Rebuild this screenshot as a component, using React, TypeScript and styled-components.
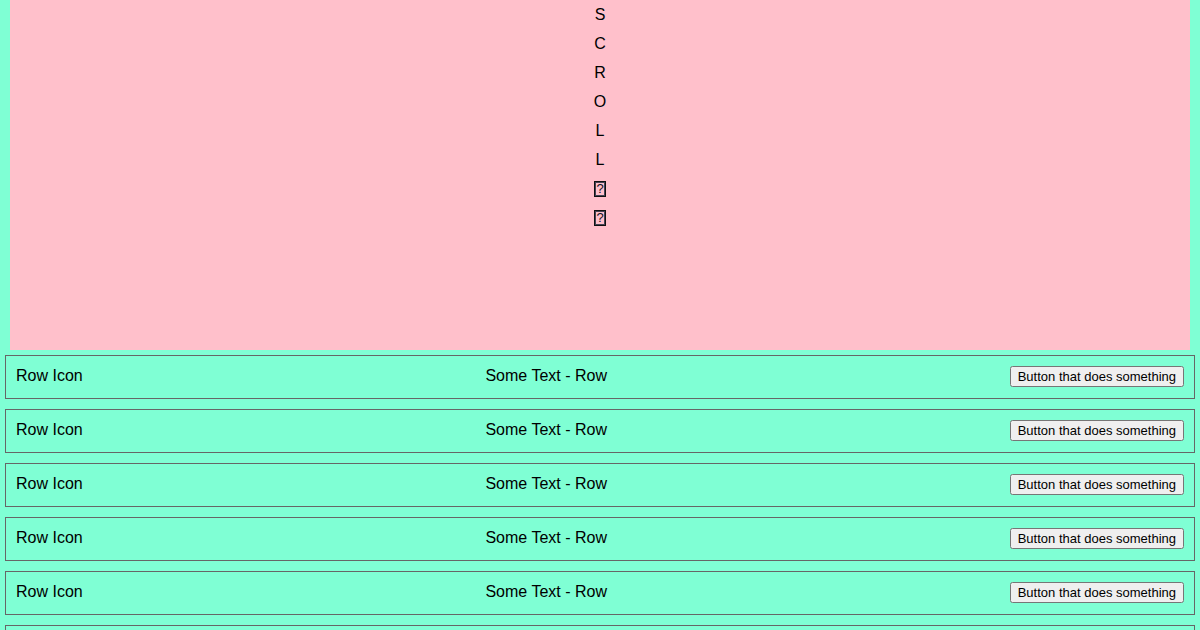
import * as React from 'react';
import styled, { createGlobalStyle } from 'styled-components';

const GlobalStyle = createGlobalStyle`
  body {
    margin: 0;
    background: aquamarine;
    font-family: "Liberation Sans", Arial, sans-serif;
    font-size: 16px;
    color: #000;
  }
`;

const ScrollPanel = styled.div`
  margin: 0 10px;
  height: 350px;
  background: pink;
  display: flex;
  flex-direction: column;
  align-items: center;
`;

const Letter = styled.div`
  line-height: 29px;
  height: 29px;
  display: flex;
  align-items: center;
`;

// stands in for the emoji glyph that the reference could not render
const MissingGlyph = styled.span`
  display: inline-flex;
  align-items: center;
  justify-content: center;
  width: 10px;
  height: 14px;
  border: 1px solid #111;
  box-shadow: inset 0 0 0 1px #445;
  font-size: 13px;
  line-height: 13px;
  color: #112;
`;

const RowList = styled.div`
  display: flex;
  flex-direction: column;
  gap: 10px;
  padding: 5px;
`;

const Row = styled.div`
  display: flex;
  justify-content: space-between;
  align-items: center;
  height: 44px;
  box-sizing: border-box;
  padding: 0 10px 2px;
  border: 1px solid #666;
`;

const RowButton = styled.button`
  font-family: "Liberation Sans", Arial, sans-serif;
  font-size: 13px;
`;

const letters = ['S', 'C', 'R', 'O', 'L', 'L'];

export default function App() {
  return (
    <>
      <GlobalStyle />
      <ScrollPanel>
        {letters.map((l, i) => (
          <Letter key={i}>{l}</Letter>
        ))}
        <Letter>
          <MissingGlyph>?</MissingGlyph>
        </Letter>
        <Letter>
          <MissingGlyph>?</MissingGlyph>
        </Letter>
      </ScrollPanel>
      <RowList>
        {Array.from({ length: 10 }).map((_, i) => (
          <Row key={i}>
            <span>Row Icon</span>
            <span>Some Text - Row</span>
            <RowButton>Button that does something</RowButton>
          </Row>
        ))}
      </RowList>
    </>
  );
}
